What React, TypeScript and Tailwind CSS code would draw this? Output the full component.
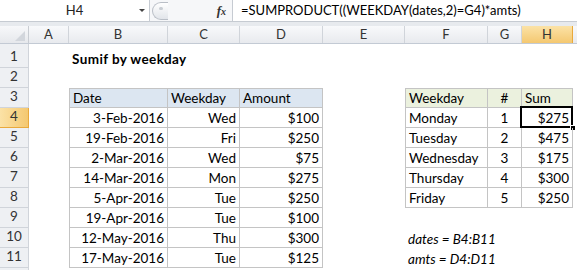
import React from "react";

type Cell = {
  text?: string;
  align?: "left" | "right" | "center";
  bold?: boolean;
  italic?: boolean;
  fill?: string;
  box?: string;
  selected?: boolean;
};

const COLS = [
  { key: "A", w: "w-[40px]" },
  { key: "B", w: "w-[99px]" },
  { key: "C", w: "w-[72px]" },
  { key: "D", w: "w-[83px]" },
  { key: "E", w: "w-[82px]" },
  { key: "F", w: "w-[83px]" },
  { key: "G", w: "w-[34px]" },
  { key: "H", w: "w-[51px]" },
  { key: "I", w: "w-[40px]" },
];

const dates = [
  ["3-Feb-2016", "Wed", "$100"],
  ["19-Feb-2016", "Fri", "$250"],
  ["2-Mar-2016", "Wed", "$75"],
  ["14-Mar-2016", "Mon", "$275"],
  ["5-Apr-2016", "Tue", "$250"],
  ["19-Apr-2016", "Tue", "$100"],
  ["12-May-2016", "Thu", "$300"],
  ["17-May-2016", "Tue", "$125"],
];

const sums = [
  ["Monday", "1", "$275"],
  ["Tuesday", "2", "$475"],
  ["Wednesday", "3", "$175"],
  ["Thursday", "4", "$300"],
  ["Friday", "5", "$250"],
];

const tb = "border-r border-b border-[#c4c4c4]";

function buildRow(r: number): Record<string, Cell> {
  const row: Record<string, Cell> = {};
  if (r === 1) row.B = { text: "Sumif by weekday", bold: true };
  if (r === 3) {
    row.B = { text: "Date", fill: "bg-[#dce6f1]", box: `${tb} border-l border-t` };
    row.C = { text: "Weekday", fill: "bg-[#dce6f1]", box: `${tb} border-t` };
    row.D = { text: "Amount", fill: "bg-[#dce6f1]", box: `${tb} border-t` };
    row.F = { text: "Weekday", fill: "bg-[#ebf1de]", box: `${tb} border-l border-t` };
    row.G = { text: "#", align: "center", fill: "bg-[#ebf1de]", box: `${tb} border-t` };
    row.H = { text: "Sum", fill: "bg-[#ebf1de]", box: `${tb} border-t` };
  }
  if (r >= 4 && r <= 11) {
    const d = dates[r - 4];
    row.B = { text: d[0], align: "right", box: `${tb} border-l` };
    row.C = { text: d[1], align: "right", box: tb };
    row.D = { text: d[2], align: "right", box: tb };
  }
  if (r >= 4 && r <= 8) {
    const s = sums[r - 4];
    row.F = { text: s[0], box: `${tb} border-l` };
    row.G = { text: s[1], align: "center", box: tb };
    row.H = { text: s[2], align: "right", box: tb, selected: r === 4 };
  }
  if (r === 10) row.F = { text: "dates = B4:B11", italic: true };
  if (r === 11) row.F = { text: "amts = D4:D11", italic: true };
  return row;
}

function FormulaBar() {
  return (
    <div className="flex h-[22px] border-b border-[#c6cbd2] bg-white">
      <div className="relative flex w-[150px] shrink-0 items-center justify-center border-r border-[#c6cbd2]">
        <span className="text-[13px] text-[#222]">H4</span>
        <span className="absolute right-[4px] top-[9px] h-0 w-0 border-x-[3px] border-t-[3px] border-x-transparent border-t-[#444]" />
      </div>
      <div className="flex w-[82px] shrink-0 items-center bg-[#f6f7f9]">
        <div className="ml-[2px] h-[18px] w-[16px] rounded-l-full border border-r-0 border-[#b9bec6] bg-gradient-to-b from-[#ffffff] to-[#e2e5ea]">
          <div className="ml-[6px] mt-[4px] h-[3px] w-[4px] rounded-full bg-[#c9cdd3]" />
        </div>
        <span className="ml-auto mr-[6px] font-['Liberation_Serif',serif] text-[13px] italic font-bold text-[#333]">
          f<span className="text-[10px]">x</span>
        </span>
      </div>
      <div className="flex flex-1 items-center border-l border-[#c6cbd2] pl-[8px] text-[13px] text-black whitespace-nowrap">
        =SUMPRODUCT((WEEKDAY(dates,2)=G4)*amts)
      </div>
    </div>
  );
}

function ColumnHeaders() {
  return (
    <div className="flex h-[18px] border-b border-[#c3cad4]">
      <div className="relative w-[29px] shrink-0 border-r border-[#c8ccd2] bg-gradient-to-b from-[#f7f8fa] to-[#e6e8ec]">
        <span className="absolute bottom-[2px] right-[3px] h-0 w-0 [border-bottom:10px_solid_#d2d6dc] [border-left:10px_solid_transparent]" />
      </div>
      {COLS.map((c) => (
        <div
          key={c.key}
          className={`${c.w} flex shrink-0 items-center justify-center border-r text-[13px] ${
            c.key === "H"
              ? "border-[#e9a93c] bg-gradient-to-b from-[#fbe2a6] to-[#f4c870] text-[#333]"
              : "border-[#d0d4da] bg-gradient-to-b from-[#f8f9fb] to-[#e8eaee] text-[#333]"
          }`}
        >
          {c.key === "I" ? "" : c.key}
        </div>
      ))}
    </div>
  );
}

function SheetRow({ r }: { r: number }) {
  const cells = buildRow(r);
  const h = r === 1 ? "h-[24px]" : "h-[20px]";
  return (
    <div className={`flex ${h}`}>
      <div
        className={`flex w-[29px] shrink-0 items-end justify-center border-b border-r pb-[1px] text-[13.5px] ${
          r === 4
            ? "border-[#e9a93c] bg-gradient-to-r from-[#fbe2a6] to-[#f4c870] text-[#333]"
            : "border-[#d0d4da] bg-[#eef0f3] text-[#333]"
        }`}
      >
        {r <= 11 ? r : ""}
      </div>
      {COLS.map((c) => {
        const cell = cells[c.key];
        if (!cell) return <div key={c.key} className={`${c.w} shrink-0`} />;
        const just =
          cell.align === "right" ? "justify-end" : cell.align === "center" ? "justify-center" : "justify-start";
        return (
          <div
            key={c.key}
            className={`${c.w} relative flex shrink-0 items-end px-[3px] pb-[1px] ${just} ${cell.fill ?? ""} ${cell.box ?? ""} ${
              cell.box ? "border-[#c4c4c4]" : ""
            }`}
          >
            <span
              className={`whitespace-nowrap leading-[16px] ${
                cell.bold ? "font-bold text-[13.5px] tracking-[0.4px]" : "text-[13.5px]"
              } ${cell.italic ? "italic" : ""}`}
            >
              {cell.text}
            </span>
            {cell.selected && (
              <>
                <span className="absolute -left-[2px] -top-[2px] -right-[1px] -bottom-[1px] border-2 border-black" />
                <span className="absolute -right-[4px] -bottom-[4px] h-[6px] w-[6px] border border-white bg-black" />
              </>
            )}
          </div>
        );
      })}
    </div>
  );
}

export default function App() {
  const rows = [1, 2, 3, 4, 5, 6, 7, 8, 9, 10, 11, 12];
  return (
    <div className="h-[270px] w-[577px] overflow-hidden bg-white font-['Lato',sans-serif] text-[13px] text-black">
      <FormulaBar />
      <div className="h-[4px] bg-[#e7eaee]" />
      <ColumnHeaders />
      {rows.map((r) => (
        <SheetRow key={r} r={r} />
      ))}
    </div>
  );
}
